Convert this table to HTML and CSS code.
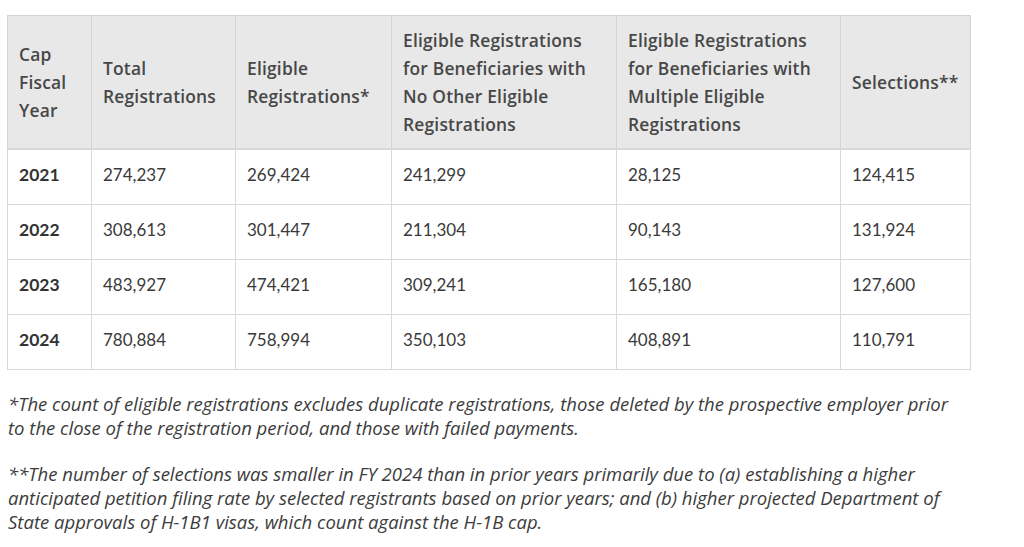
FILE: index.html
```html
<!DOCTYPE html>
<html lang="en">
<head>
<meta charset="utf-8">
<title>H-1B Registrations</title>
<link rel="stylesheet" href="styles.css">
</head>
<body>
<div class="page">
  <table class="data">
    <colgroup>
      <col class="c1"><col class="c2"><col class="c3"><col class="c4"><col class="c5"><col class="c6">
    </colgroup>
    <thead>
      <tr>
        <th>Cap Fiscal Year</th>
        <th>Total Registrations</th>
        <th>Eligible Registrations*</th>
        <th>Eligible Registrations for Beneficiaries with No Other Eligible Registrations</th>
        <th>Eligible Registrations for Beneficiaries with Multiple Eligible Registrations</th>
        <th>Selections**</th>
      </tr>
    </thead>
    <tbody>
      <tr><td class="yr">2021</td><td>274,237</td><td>269,424</td><td>241,299</td><td>28,125</td><td>124,415</td></tr>
      <tr><td class="yr">2022</td><td>308,613</td><td>301,447</td><td>211,304</td><td>90,143</td><td>131,924</td></tr>
      <tr><td class="yr">2023</td><td>483,927</td><td>474,421</td><td>309,241</td><td>165,180</td><td>127,600</td></tr>
      <tr><td class="yr">2024</td><td>780,884</td><td>758,994</td><td>350,103</td><td>408,891</td><td>110,791</td></tr>
    </tbody>
  </table>
  <div class="notes">
    <p>*The count of eligible registrations excludes duplicate registrations, those deleted by the prospective employer prior to the close of the registration period, and those with failed payments.</p>
    <p>**The number of selections was smaller in FY 2024 than in prior years primarily due to (a) establishing a higher anticipated petition filing rate by selected registrants based on prior years; and (b) higher projected Department of State approvals of H-1B1 visas, which count against the H-1B cap.</p>
  </div>
</div>
</body>
</html>
```
FILE: styles.css
```css
html, body {
  margin: 0;
  padding: 0;
  background: #ffffff;
}
.page {
  padding: 15px 0 0 7px;
  font-family: Lato, "Liberation Sans", sans-serif;
  color: #333333;
}
.data {
  width: 963px;
  border-collapse: collapse;
  table-layout: fixed;
  border: 1px solid #d4d4d4;
}
.c1 { width: 84px; }
.c2 { width: 144px; }
.c3 { width: 156px; }
.c4 { width: 225px; }
.c5 { width: 224px; }
.c6 { width: 130px; }
.data th {
  background: #e8e8e8;
  font-family: "Open Sans", Lato, sans-serif;
  font-size: 17.4px;
  letter-spacing: 0.2px;
  font-weight: 600;
  line-height: 28px;
  text-align: left;
  vertical-align: middle;
  padding: 10px 8px 10px 11px;
  border: 1px solid #d4d4d4;
  border-bottom: 2px solid #d8d8d8;
  color: #474747;
}
.data td {
  font-size: 17px;
  line-height: 28px;
  padding: 11px 11px 15px 11px;
  border: 1px solid #d8d8d8;
  color: #3a3a3a;
  vertical-align: middle;
}
.data td.yr {
  font-weight: 700;
  font-size: 17.5px;
  color: #333333;
}
.notes {
  margin-top: 22px;
  width: 955px;
  font-family: "Open Sans", Lato, sans-serif;
  font-style: italic;
  font-size: 18.5px;
  line-height: 24px;
  color: #3c3c3c;
}
.notes p {
  margin: 0 0 22px 1px;
}
```
